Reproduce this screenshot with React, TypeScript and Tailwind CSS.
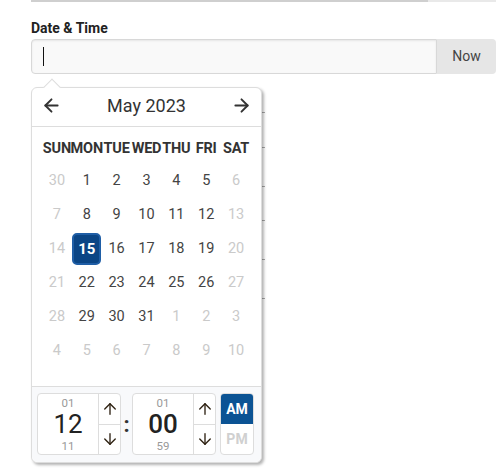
import { ArrowLeft, ArrowRight, ArrowUp, ArrowDown } from 'lucide-react'

const weekDays = ['SUN', 'MON', 'TUE', 'WED', 'THU', 'FRI', 'SAT']

const weeks: { d: number; muted: boolean }[][] = [
  [30, 1, 2, 3, 4, 5, 6],
  [7, 8, 9, 10, 11, 12, 13],
  [14, 15, 16, 17, 18, 19, 20],
  [21, 22, 23, 24, 25, 26, 27],
  [28, 29, 30, 31, 1, 2, 3],
  [4, 5, 6, 7, 8, 9, 10],
].map((row, r) =>
  row.map((d, c) => ({
    d,
    muted: c === 0 || c === 6 || (r === 0 && d > 20) || (r >= 4 && d < 20 && !(r === 4 && d > 27)),
  }))
)

function Spinner({ prev, value, next, bold }: { prev: string; value: string; next: string; bold?: boolean }) {
  return (
    <div className="flex h-[62px] w-[84px] rounded border border-[#ddd] bg-white">
      <div className="flex flex-1 flex-col items-center justify-center">
        <span className="text-[11.5px] leading-[12px] text-[#999]">{prev}</span>
        <span className={`text-[26px] leading-[31px] text-[#222] ${bold ? 'font-medium' : ''}`}>{value}</span>
        <span className="text-[11.5px] leading-[12px] text-[#999]">{next}</span>
      </div>
      <div className="flex w-[22px] flex-col border-l border-[#ddd]">
        <div className="flex flex-1 items-center justify-center border-b border-[#ddd]">
          <ArrowUp size={18} strokeWidth={1.8} className="text-[#2e2212]" />
        </div>
        <div className="flex flex-1 items-center justify-center">
          <ArrowDown size={18} strokeWidth={1.8} className="text-[#2e2212]" />
        </div>
      </div>
    </div>
  )
}

export default function App() {
  const ticks = [112, 147, 186, 220, 259, 298]

  return (
    <div className="relative h-[472px] w-[504px] overflow-hidden bg-white font-['Roboto',sans-serif] text-[#333]">
      <div className="ml-[31px] flex h-[2px] w-[465px]">
        <div className="w-[397px] bg-[#cfcfcf]" />
        <div className="flex-1 bg-[#e9e9e9]" />
      </div>

      <div className="ml-[31px] mt-[18px] text-[14px] font-bold leading-[17px] text-[#222]">Date &amp; Time</div>

      <div className="ml-[31px] mt-[2px] flex h-[35px] w-[465px]">
        <div className="flex flex-1 items-center rounded-l border border-[#d8d8d8] bg-[#f9f9f9] pl-[11px] shadow-[inset_0_1px_2px_rgba(0,0,0,0.08)]">
          <span className="h-[19px] w-[1px] bg-[#111]" />
        </div>
        <div className="flex w-[59px] items-center justify-center rounded-r bg-[#e6e6e6] text-[14px] text-[#444]">
          Now
        </div>
      </div>

      {ticks.map((t) => (
        <div key={t} className="absolute left-[261px] h-[1px] w-[4px] bg-[#aaa]" style={{ top: t }} />
      ))}

      <div className="absolute left-[31px] top-[87px] flex h-[376px] w-[231px] flex-col rounded-md border border-[#ddd] bg-white shadow-[2px_2px_3px_rgba(0,0,0,0.3)]">
        <div className="absolute left-[14px] top-[-7px] h-[12px] w-[12px] rotate-45 border-l border-t border-[#ddd] bg-white" />

        <div className="flex h-[39px] items-center justify-between border-b border-[#ddd] px-[9px] pb-[3px]">
          <ArrowLeft size={21} strokeWidth={2.2} className="text-[#333]" />
          <span className="text-[18px] text-[#333]">May 2023</span>
          <ArrowRight size={21} strokeWidth={2.2} className="text-[#333]" />
        </div>

        <div className="mt-[7px] grid h-[30px] grid-cols-7 px-[10px]">
          {weekDays.map((w) => (
            <div key={w} className="flex items-center justify-center whitespace-nowrap text-[14.5px] font-bold tracking-[-0.2px] text-[#333]">
              {w}
            </div>
          ))}
        </div>

        <div className="px-[10px]">
          {weeks.map((row, r) => (
            <div key={r} className="grid h-[34px] grid-cols-7">
              {row.map((cell, c) => {
                const selected = r === 2 && cell.d === 15
                return (
                  <div key={c} className="flex items-center justify-center">
                    {selected ? (
                      <span className="flex h-[32px] w-[29px] items-center justify-center rounded-[5px] border-2 border-[#1f5ea6] bg-[#0b4585] text-[15px] font-bold text-white">
                        15
                      </span>
                    ) : (
                      <span className={`text-[14.5px] ${cell.muted ? 'text-[#cacaca]' : 'text-[#444]'}`}>{cell.d}</span>
                    )}
                  </div>
                )
              })}
            </div>
          ))}
        </div>

        <div className="mt-auto flex h-[76px] items-start rounded-b-md border-t border-[#ddd] bg-[#f8f9fb] pl-[5px] pt-[6px]">
          <Spinner prev="01" value="12" next="11" />
          <span className="flex h-[62px] w-[11px] items-center justify-center text-[22px] font-bold text-[#333]">:</span>
          <Spinner prev="01" value="00" next="59" bold />
          <div className="ml-[4px] flex h-[62px] w-[34px] flex-col overflow-hidden rounded border border-[#ddd] bg-white">
            <div className="flex flex-1 items-center justify-center bg-[#0b5394] text-[14px] font-bold text-white">AM</div>
            <div className="flex flex-1 items-center justify-center text-[14px] font-bold text-[#d0d0d0]">PM</div>
          </div>
        </div>
      </div>
    </div>
  )
}
